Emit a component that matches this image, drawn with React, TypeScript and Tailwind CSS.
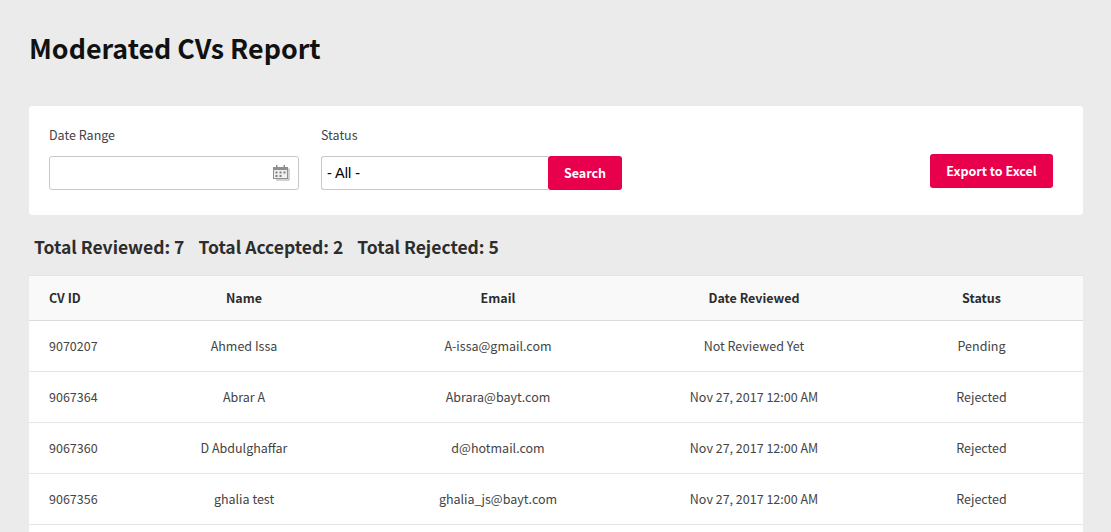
const rows = [
  { id: "9070207", name: "Ahmed Issa", email: "A-issa@gmail.com", date: "Not Reviewed Yet", status: "Pending" },
  { id: "9067364", name: "Abrar A", email: "Abrara@bayt.com", date: "Nov 27, 2017 12:00 AM", status: "Rejected" },
  { id: "9067360", name: "D Abdulghaffar", email: "d@hotmail.com", date: "Nov 27, 2017 12:00 AM", status: "Rejected" },
  { id: "9067356", name: "ghalia test", email: "ghalia_js@bayt.com", date: "Nov 27, 2017 12:00 AM", status: "Rejected" },
];

const CalendarIcon = () => (
  <svg width="17" height="16" viewBox="0 0 17 16" className="absolute right-[8px] top-[8px]">
    <path d="M16 3.5V15H3" fill="none" stroke="#a3a3a3" strokeWidth="1" />
    <rect x="0" y="2" width="15" height="12" fill="#8f8f8f" />
    <rect x="1" y="5" width="13" height="8" fill="#efefef" />
    <rect x="3" y="0" width="1.5" height="3" fill="#8f8f8f" />
    <rect x="10.5" y="0" width="1.5" height="3" fill="#8f8f8f" />
    <rect x="2.5" y="6.5" width="2" height="2" fill="#808080" />
    <rect x="6.5" y="6.5" width="2" height="2" fill="#808080" />
    <rect x="10.5" y="6.5" width="2" height="2" fill="#808080" />
    <rect x="2.5" y="10" width="2" height="2" fill="#808080" />
    <rect x="6.5" y="10" width="2" height="2" fill="#808080" />
  </svg>
);

export default function App() {
  return (
    <div className="h-screen overflow-hidden bg-[#ebebeb] pl-[29px] pr-[28px] font-['Noto_Sans_CJK_SC','Noto_Sans',sans-serif] text-[#2d2d2d]">
      <h1 className="pt-[29px] text-[26.8px] leading-[38px] font-bold text-[#111]">Moderated CVs Report</h1>

      <div className="mt-[39px] flex h-[109px] items-start rounded-[3px] bg-white pl-5 pr-[30px]">
        <div className="mt-[19px] w-[250px]">
          <label className="block text-[12.5px] leading-[20px] text-[#444]">Date Range</label>
          <div className="relative mt-[11px] h-[34px] rounded-[3px] border border-[#c8c8c8] bg-white">
            <CalendarIcon />
          </div>
        </div>

        <div className="mt-[19px] ml-[22px]">
          <label className="block text-[12.5px] leading-[20px] text-[#444]">Status</label>
          <div className="mt-[11px] flex h-[34px]">
            <div className="flex w-[227px] items-center rounded-l-[3px] border border-r-0 border-[#c8c8c8] pt-px pl-[5px] font-['Liberation_Sans',sans-serif] text-[14.5px] text-black">
              - All -
            </div>
            <button className="w-[74px] rounded-[3px] bg-[#e8004c] text-[12.5px] font-bold text-white">Search</button>
          </div>
        </div>

        <button className="mt-[48px] ml-auto h-[34px] w-[123px] rounded-[3px] bg-[#e8004c] text-[12.5px] font-bold text-white">
          Export to Excel
        </button>
      </div>

      <div className="mt-[18px] flex gap-[14px] pl-[5px] text-[17.5px] leading-[27px] font-bold text-[#2d2d2d]">
        <span>Total Reviewed: 7</span>
        <span>Total Accepted: 2</span>
        <span>Total Rejected: 5</span>
      </div>

      <table className="mt-[15px] w-full table-fixed border-collapse bg-white text-[12.5px]">
        <thead>
          <tr className="h-[45px] border-t border-b border-t-[#e5e5e5] border-b-[#dcdcdc] bg-[#f9f9f9] font-bold">
            <th className="w-[91px] pl-5 text-left font-bold whitespace-nowrap">CV ID</th>
            <th className="w-[248px] font-bold">Name</th>
            <th className="w-[260px] font-bold">Email</th>
            <th className="w-[252px] font-bold">Date Reviewed</th>
            <th className="font-bold">Status</th>
          </tr>
        </thead>
        <tbody className="text-[#444]">
          {rows.map((r) => (
            <tr key={r.id} className="h-[51px] border-b border-[#e5e5e5]">
              <td className="pl-5">{r.id}</td>
              <td className="text-center">{r.name}</td>
              <td className="text-center">{r.email}</td>
              <td className="text-center">{r.date}</td>
              <td className="text-center">{r.status}</td>
            </tr>
          ))}
          <tr className="h-[51px]">
            <td colSpan={5} />
          </tr>
        </tbody>
      </table>
    </div>
  );
}
